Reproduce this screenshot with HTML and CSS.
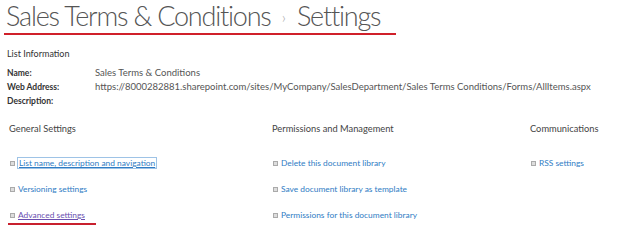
FILE: index.html
```html
<!DOCTYPE html>
<html>
<head>
<meta charset="utf-8">
<link rel="stylesheet" href="styles.css">
</head>
<body>
<div class="page">
  <div class="title-wrap">
    <h1 class="title">Sales Terms &amp; Conditions <span class="sep">›</span> Settings</h1>
  </div>
  <div class="info">
    <div class="info-head">List Information</div>
    <div class="info-grid">
      <div class="lbl">Name:</div><div class="val">Sales Terms &amp; Conditions</div>
      <div class="lbl">Web Address:</div><div class="val">https://8000282881.sharepoint.com/sites/MyCompany/SalesDepartment/Sales Terms Conditions/Forms/AllItems.aspx</div>
      <div class="lbl">Description:</div><div class="val"></div>
    </div>
  </div>
  <div class="cols">
    <div class="col">
      <div class="col-head">General Settings</div>
      <ul class="links">
        <li><a class="focused" href="#">List name, description and navigation</a></li>
        <li><a href="#">Versioning settings</a></li>
        <li class="marked"><a class="visited" href="#">Advanced settings</a></li>
      </ul>
    </div>
    <div class="col">
      <div class="col-head">Permissions and Management</div>
      <ul class="links">
        <li><a href="#">Delete this document library</a></li>
        <li><a href="#">Save document library as template</a></li>
        <li><a href="#">Permissions for this document library</a></li>
      </ul>
    </div>
    <div class="col">
      <div class="col-head">Communications</div>
      <ul class="links">
        <li><a href="#">RSS settings</a></li>
      </ul>
    </div>
  </div>
</div>
</body>
</html>
```

FILE: styles.css
```css
html, body {
  margin: 0;
  padding: 0;
  background: #fff;
}
body {
  font-family: Lato, "Liberation Sans", sans-serif;
  color: #444;
  font-size: 10px;
}
.page {
  width: 628px;
  height: 230px;
  overflow: hidden;
}
.title-wrap {
  padding: 0 0 0 4px;
}
.title {
  display: inline-block;
  margin: 0;
  padding: 0 16px 0 2px;
  font-weight: 300;
  font-size: 27px;
  line-height: 31px;
  letter-spacing: -1.2px;
  color: #555;
  border-bottom: 2px solid #d0202a;
}
.sep {
  font-size: 15px;
  color: #aaa;
  vertical-align: 3px;
  margin: 0 5px;
  letter-spacing: 0;
}
.info {
  padding: 12px 0 0 7px;
}
.info-head {
  font-size: 9px;
  line-height: 14px;
  color: #333;
  margin-bottom: 5px;
}
.info-grid {
  display: grid;
  grid-template-columns: 88px auto;
}
.lbl {
  font-weight: 700;
  color: #333;
  line-height: 14px;
  font-size: 8.5px;
}
.val {
  line-height: 14px;
  color: #555;
  font-size: 9.5px;
  min-height: 14px;
  white-space: nowrap;
}
.cols {
  display: grid;
  grid-template-columns: 263px 258px auto;
  padding: 14px 0 0 9px;
}
.col-head {
  font-size: 9.3px;
  line-height: 14px;
  color: #444;
  margin-bottom: 20px;
}
.links {
  list-style: none;
  margin: 0;
  padding: 0;
}
.links li {
  position: relative;
  height: 26px;
  line-height: 14px;
  padding-left: 9px;
  font-size: 8.4px;
}
.links li::before {
  content: "";
  position: absolute;
  left: 1px;
  top: 5px;
  width: 3px;
  height: 3px;
  border: 1px solid #aaa;
  background: #ddd;
}
.links a {
  color: #2f7cc4;
  text-decoration: none;
}
.links a.focused {
  text-decoration: underline;
  outline: 1px solid #9ec3e6;
  outline-offset: 0;
  padding: 0 1px;
}
.links a.visited {
  color: #6a4fb0;
  text-decoration: underline;
}
.links li.marked::after {
  content: "";
  position: absolute;
  left: -1px;
  top: 15px;
  width: 88px;
  height: 2px;
  background: #c8202e;
}
```
